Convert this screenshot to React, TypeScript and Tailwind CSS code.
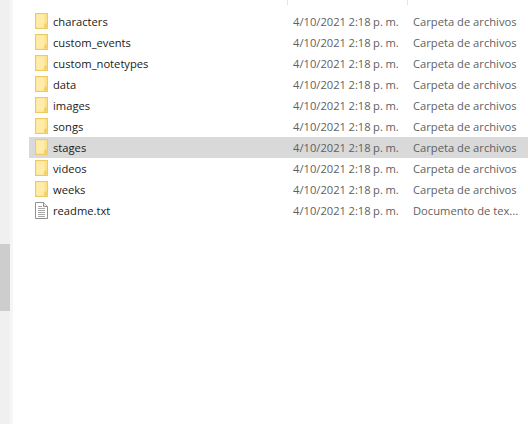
import React from "react";

const rows = [
  { name: "characters", type: "Carpeta de archivos" },
  { name: "custom_events", type: "Carpeta de archivos" },
  { name: "custom_notetypes", type: "Carpeta de archivos" },
  { name: "data", type: "Carpeta de archivos" },
  { name: "images", type: "Carpeta de archivos" },
  { name: "songs", type: "Carpeta de archivos" },
  { name: "stages", type: "Carpeta de archivos", selected: true },
  { name: "videos", type: "Carpeta de archivos" },
  { name: "weeks", type: "Carpeta de archivos" },
  { name: "readme.txt", type: "Documento de tex...", file: true },
];

const FolderIcon = () => (
  <svg width="13" height="16" viewBox="0 0 13 16" className="shrink-0">
    <rect x="0.5" y="0.5" width="12" height="15" fill="#fde28a" stroke="#eecb62" />
    <path d="M1.5 1.5H9.5V10L8 14.5H1.5Z" fill="#ffecaa" />
    <path d="M10 10.5H11.5V14.5H9Z" fill="#f1ca58" />
  </svg>
);

const FileIcon = () => (
  <svg width="13" height="17" viewBox="0 0 13 17" className="shrink-0">
    <path d="M0.5 0.5H8.5L12.5 4.5V16.5H0.5Z" fill="#ffffff" stroke="#8f8f8f" />
    <path d="M8.5 0.5V4.5H12.5" fill="#e8e8e8" stroke="#8f8f8f" />
    <path d="M3 4.5H7M3 6.5H10M3 8.5H10M3 10.5H10M3 12.5H10M3 14.5H10" stroke="#a8a8a8" />
  </svg>
);

export default function App() {
  return (
    <div className="flex h-[424px] w-[528px] overflow-hidden bg-white font-['Open_Sans','Noto_Sans',sans-serif] text-[11.2px]">
      {/* scrollbar */}
      <div className="w-[10px] shrink-0 bg-[#f0f0f0] pt-[244px]">
        <div className="h-[67px] w-full bg-[#cdcdcd]" />
      </div>
      <div className="w-[3px] shrink-0 bg-[#f6f6f6]" />

      <div className="min-w-0 flex-1">
        {/* column dividers */}
        <div className="flex h-[11px] items-start pl-[274px]">
          <div className="h-[5px] w-[120px] border-l border-[#e5e5e5]" />
          <div className="h-[5px] border-l border-[#e5e5e5]" />
        </div>

        <div className="pl-[16px]">
          {rows.map((row) => (
            <div
              key={row.name}
              className={`flex h-[21px] items-center ${row.selected ? "bg-[#d9d9d9]" : ""}`}
            >
              <div className="flex w-[264px] shrink-0 items-center gap-[5px] pl-[6px]">
                {row.file ? <FileIcon /> : <FolderIcon />}
                <span className="pt-[2px] text-[#1a1a1a]">{row.name}</span>
              </div>
              <span className="w-[120px] shrink-0 whitespace-nowrap pt-[2px] text-[#5f5f5f] [word-spacing:-0.4px]">
                4/10/2021 2:18 p. m.
              </span>
              <span className="whitespace-nowrap pt-[2px] text-[#5f5f5f]">{row.type}</span>
            </div>
          ))}
        </div>
      </div>
    </div>
  );
}
